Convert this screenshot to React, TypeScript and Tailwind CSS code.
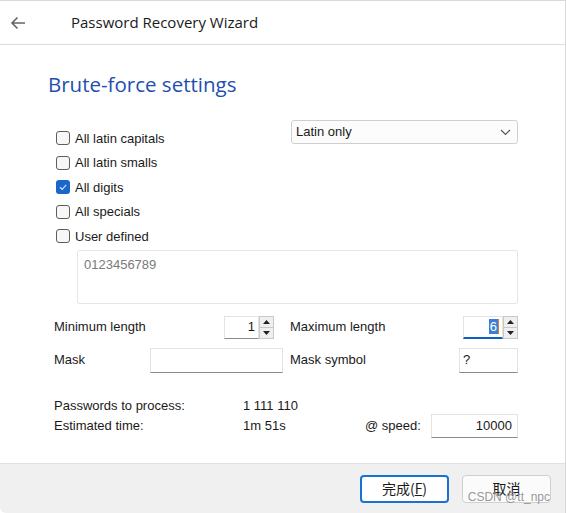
import React from "react";

const Check = ({ checked, label }: { checked?: boolean; label: string }) => (
  <div className="flex h-[24.5px] items-center">
    {checked ? (
      <div className="flex h-[14px] w-[14px] items-center justify-center rounded-[3px] bg-[#1a66c9]">
        <svg width="10" height="10" viewBox="0 0 10 10">
          <path d="M2 5.2 L4.2 7.3 L8.2 2.8" stroke="#cfe0f5" strokeWidth="1.2" fill="none" />
        </svg>
      </div>
    ) : (
      <div className="h-[14px] w-[14px] rounded-[3px] border border-[#5e5e5e] bg-[#f7f7f7]" />
    )}
    <span className="ml-[5px] text-[13px] text-[#1a1a1a]">{label}</span>
  </div>
);

const Spin = ({ value, active }: { value: string; active?: boolean }) => (
  <div className="flex h-[23px]">
    <div
      className={`flex items-center justify-end border border-[#e3e3e3] bg-white pr-[3px] text-[13px] ${
        active ? "w-[40px] border-b-2 border-b-[#0a5fc4]" : "w-[35px] border-b-[#8a8a8a]"
      }`}
    >
      {active ? (
        <span className="flex items-center">
          <span className="bg-[#3b7fd6] px-[1px] leading-[15px] text-white">6</span>
          <span className="h-[15px] w-[1px] bg-[#d9822b]" />
        </span>
      ) : (
        <span>{value}</span>
      )}
    </div>
    <div className="flex w-[15px] flex-col border border-[#c8c8c8] bg-[#efefef]">
      <div className="flex flex-1 items-center justify-center border-b border-[#c8c8c8]">
        <svg width="7" height="4" viewBox="0 0 7 4">
          <path d="M0 4 L3.5 0 L7 4 Z" fill="#222" />
        </svg>
      </div>
      <div className="flex flex-1 items-center justify-center">
        <svg width="7" height="4" viewBox="0 0 7 4">
          <path d="M0 0 L3.5 4 L7 0 Z" fill="#222" />
        </svg>
      </div>
    </div>
  </div>
);

export default function App() {
  return (
    <div
      className="flex h-[513px] w-[566px] flex-col overflow-hidden rounded-bl-[6px] border-r border-t border-[#d9d9d9] bg-white text-[#1a1a1a]"
      style={{ fontFamily: '"Liberation Sans", Tahoma, sans-serif' }}
    >
      {/* header */}
      <div className="flex h-[44px] items-center border-b border-[#dcdcdc]">
        <svg className="ml-[10px]" width="16" height="14" viewBox="0 0 16 14">
          <path d="M15 7 H2 M7.5 1.5 L2 7 L7.5 12.5" stroke="#666" strokeWidth="1.6" fill="none" />
        </svg>
        <span
          className="ml-[45px] text-[15px] text-[#1a1a1a]"
          style={{ fontFamily: '"Open Sans", "Noto Sans", sans-serif' }}
        >
          Password Recovery Wizard
        </span>
      </div>

      {/* body */}
      <div className="flex flex-1 flex-col pl-[54px] pr-[47px]">
        <div
          className="-ml-[6px] mt-[24px] text-[20.5px] leading-[30px] text-[#1e4fb0]"
          style={{ fontFamily: '"Open Sans", "Noto Sans", sans-serif' }}
        >
          Brute-force settings
        </div>

        <div className="mt-[21px] flex">
          <div className="ml-[2px] flex w-[235px] flex-col pt-[6px]">
            <Check label="All latin capitals" />
            <Check label="All latin smalls" />
            <Check checked label="All digits" />
            <Check label="All specials" />
            <Check label="User defined" />
          </div>
          <div className="flex h-[24px] flex-1 items-center justify-between rounded-[3px] border border-[#cfcfcf] bg-[#fcfcfc] pl-[4px] pr-[6px] text-[13px]">
            <span>Latin only</span>
            <svg width="11" height="7" viewBox="0 0 11 7">
              <path d="M1 1 L5.5 5.5 L10 1" stroke="#555" strokeWidth="1.1" fill="none" />
            </svg>
          </div>
        </div>

        <div className="ml-[23px] mt-[1px] h-[54px] rounded-[2px] border border-[#e6e6e6] bg-white pl-[6px] pt-[4px] text-[13px] text-[#7a7a7a]">
          0123456789
        </div>

        <div className="mt-[12px] flex h-[23px] items-center text-[13px]">
          <span className="w-[170px]">Minimum length</span>
          <Spin value="1" />
          <span className="ml-[16px] flex-1">Maximum length</span>
          <Spin value="6" active />
        </div>

        <div className="mt-[9px] flex h-[25px] items-center text-[13px]">
          <span className="w-[96px]">Mask</span>
          <div className="h-[25px] w-[133px] border border-[#e3e3e3] border-b-[#8a8a8a] bg-white" />
          <span className="ml-[7px] flex-1">Mask symbol</span>
          <div className="flex h-[25px] w-[59px] items-center border border-[#e3e3e3] border-b-[#8a8a8a] bg-white pl-[3px]">
            ?
          </div>
        </div>

        <div className="mt-[25px] flex h-[16px] items-center text-[13px]">
          <span className="w-[189px]">Passwords to process:</span>
          <span>1 111 110</span>
        </div>
        <div className="flex h-[24px] items-center text-[13px]">
          <span className="w-[189px]">Estimated time:</span>
          <span className="w-[122px]">1m 51s</span>
          <span className="w-[66px]">@ speed:</span>
          <div className="flex h-[24px] flex-1 items-center justify-end border border-[#e3e3e3] border-b-[#8a8a8a] bg-white pr-[5px]">
            10000
          </div>
        </div>
      </div>

      {/* footer */}
      <div className="relative flex h-[50px] items-center justify-end gap-[13px] border-t border-[#e0e0e0] bg-[#f0f0f0] pr-[14px]">
        <div
          className="flex h-[28px] w-[89px] items-center justify-center rounded-[4px] border-2 border-[#1a72d0] bg-white text-[14px]"
          style={{ fontFamily: '"Noto Sans CJK SC", "Noto Sans", sans-serif' }}
        >
          完成(<span className="underline">F</span>)
        </div>
        <div
          className="flex h-[28px] w-[89px] items-center justify-center rounded-[4px] border border-[#d0d0d0] bg-[#fbfbfb] text-[14px]"
          style={{ fontFamily: '"Noto Sans CJK SC", "Noto Sans", sans-serif' }}
        >
          取消
        </div>
        <span
          className="absolute bottom-[7px] right-[15px] text-[12px] text-[#8c8c8c]/90"
          style={{ fontFamily: '"Liberation Sans", sans-serif' }}
        >
          CSDN @tt_npc
        </span>
      </div>
    </div>
  );
}
